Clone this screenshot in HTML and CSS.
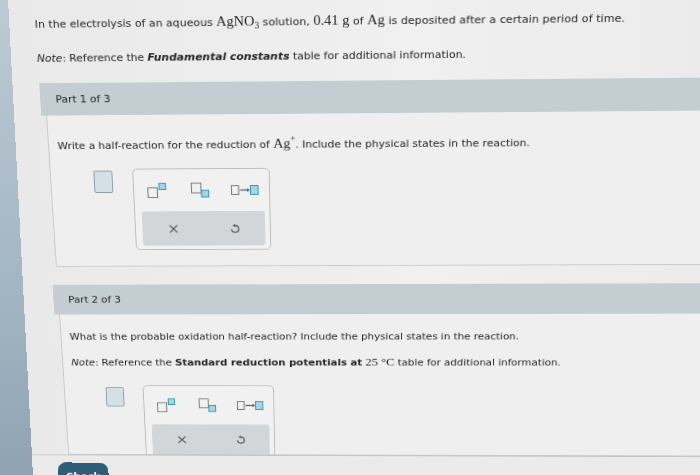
FILE: index.html
```html
<!DOCTYPE html>
<html lang="en">

<head>
    <meta charset="UTF-8">
    <meta name="viewport" content="width=device-width, initial-scale=1.0">
    <title>Electrolysis of AgNO3</title>
    <link rel="stylesheet" href="styles.css">
</head>

<body>
    <div class="screen">
        <main class="content">
            <p class="lead">In the electrolysis of an aqueous <span class="m">AgNO<sub>3</sub></span> solution, <span class="m">0.41 g</span> of <span class="m">Ag</span> is deposited after a certain period of time.</p>
            <p class="note"><i>Note</i>: Reference the <b><i>Fundamental constants</i></b> table for additional information.</p>

            <section class="part part-1">
                <div class="part-head">Part 1 of 3</div>
                <div class="part-body">
                    <p>Write a half-reaction for the reduction of <span class="m">Ag<sup>+</sup></span>. Include the physical states in the reaction.</p>
                    <div class="answer">
                        <span class="slot"></span>
                        <div class="palette">
                            <div class="tools">
                                <svg width="20" height="17" viewBox="0 0 20 17"><rect x="0.5" y="5.5" width="10" height="11" class="box"/><rect x="12.5" y="0.5" width="7" height="7" class="blue"/></svg>
                                <svg width="20" height="17" viewBox="0 0 20 17"><rect x="0.5" y="0.5" width="10" height="11" class="box"/><rect x="11" y="8.5" width="7.5" height="7.5" class="blue"/></svg>
                                <svg width="29" height="11" viewBox="0 0 29 11"><rect x="0.5" y="0.5" width="7.5" height="10" class="box"/><path d="M9.5 5.5h8" class="line"/><path d="M17 3.5l3 2-3 2z" class="head"/><rect x="20.5" y="0.5" width="8" height="10" class="blue"/></svg>
                            </div>
                            <div class="actions">
                                <svg width="10" height="10" viewBox="0 0 10 10"><path d="M1 1l8 8M9 1l-8 8" class="stroke"/></svg>
                                <svg width="10" height="12" viewBox="0 0 10 12"><path d="M5 2.5h0.3a3.8 3.8 0 1 1-3.8 4.1" class="stroke"/><path d="M2.6 2.5l2.8-2v4z" class="fill"/></svg>
                            </div>
                        </div>
                    </div>
                </div>
            </section>

            <section class="part part-2">
                <div class="part-head">Part 2 of 3</div>
                <div class="part-body">
                    <p>What is the probable oxidation half-reaction? Include the physical states in the reaction.</p>
                    <p class="sub-note"><i>Note</i>: Reference the <b>Standard reduction potentials at</b> <span class="m m-small">25 °C</span> table for additional information.</p>
                    <div class="answer">
                        <span class="slot"></span>
                        <div class="palette">
                            <div class="tools">
                                <svg width="20" height="17" viewBox="0 0 20 17"><rect x="0.5" y="5.5" width="10" height="11" class="box"/><rect x="12.5" y="0.5" width="7" height="7" class="blue"/></svg>
                                <svg width="20" height="17" viewBox="0 0 20 17"><rect x="0.5" y="0.5" width="10" height="11" class="box"/><rect x="11" y="8.5" width="7.5" height="7.5" class="blue"/></svg>
                                <svg width="29" height="11" viewBox="0 0 29 11"><rect x="0.5" y="0.5" width="7.5" height="10" class="box"/><path d="M9.5 5.5h8" class="line"/><path d="M17 3.5l3 2-3 2z" class="head"/><rect x="20.5" y="0.5" width="8" height="10" class="blue"/></svg>
                            </div>
                            <div class="actions">
                                <svg width="10" height="10" viewBox="0 0 10 10"><path d="M1 1l8 8M9 1l-8 8" class="stroke"/></svg>
                                <svg width="10" height="12" viewBox="0 0 10 12"><path d="M5 2.5h0.3a3.8 3.8 0 1 1-3.8 4.1" class="stroke"/><path d="M2.6 2.5l2.8-2v4z" class="fill"/></svg>
                            </div>
                        </div>
                    </div>
                </div>
            </section>
        </main>

        <footer class="footer">
            <button class="check">Check</button>
        </footer>
    </div>
</body>

</html>
```

FILE: styles.css
```css
html,
body {
    margin: 0;
    padding: 0;
}

/* monitor bezel on the left, page background on the right */
body {
    height: 475px;
    overflow: hidden;
    background:
        linear-gradient(87deg, transparent 32.9px, #e9e9e9 32.9px, #f0f0f0 60%, #ebebeb 100%),
        linear-gradient(180deg, #bccad4 0%, #a3b6c4 60%, #8fa3b2 100%);
}

/* the photographed screen: seen a little from above and from the left */
.screen {
    width: 820px;
    color: #242424;
    font-family: "DejaVu Sans", "Liberation Sans", sans-serif;
    font-size: 11px;
    line-height: 16px;
    transform-origin: 0 0;
    transform: matrix3d(0.976677, -0.010876, 0, -0.0000299657,
            0.070337, 0.960916, 0, 0.000193314,
            0, 0, 1, 0,
            9.31145, 2.24857, 0, 1);
}

.content {
    padding: 16px 0 0 24.6px;
}

p {
    margin: 0;
}

.lead {
    letter-spacing: 0.08px;
}

.m {
    font-family: "Liberation Serif", serif;
    font-size: 14.5px;
    line-height: 0;
    letter-spacing: 0;
}

.m-small {
    font-size: 13.5px;
}

.m sub {
    font-size: 9.5px;
    vertical-align: -2.8px;
}

.m sup {
    font-size: 9.5px;
    vertical-align: 6.6px;
}

.note {
    margin-top: 20px;
}

.part-1 {
    margin-top: 17.6px;
}

.part-2 {
    margin-top: 21px;
}

.part-head {
    height: 35px;
    line-height: 35px;
    padding-left: 16.5px;
    background: #c4cdd2;
}

.part-body {
    margin-left: 5px;
    padding: 26.8px 0 18.3px 9.5px;
    background: #efefef;
    border-left: 1px solid #c9c9c9;
    border-bottom: 1px solid #c9c9c9;
}

.part-2 .part-body {
    height: 171.4px;
    box-sizing: border-box;
    padding-top: 18.5px;
    overflow: hidden;
}

.sub-note {
    margin-top: 15.3px;
}

.answer {
    display: flex;
    align-items: flex-start;
    gap: 21.7px;
    margin-top: 16.9px;
    padding-left: 36.1px;
}

.part-2 .answer {
    margin-top: 18.7px;
}

.slot {
    width: 19.5px;
    height: 24.5px;
    margin-top: 2px;
    box-sizing: border-box;
    background: #d3e1e7;
    border: 1px solid #8c9da6;
    border-radius: 2px;
}

.palette {
    width: 144px;
    box-sizing: border-box;
    padding-bottom: 3.5px;
    background: #f1f1f1;
    border: 1px solid #bcbcbc;
    border-radius: 5px;
}

.tools {
    display: grid;
    grid-template-columns: repeat(3, 1fr);
    align-items: center;
    justify-items: center;
    height: 47px;
    padding: 0 3px 0 1px;
}

.actions {
    display: grid;
    grid-template-columns: 1fr 1fr;
    align-items: center;
    justify-items: center;
    height: 39px;
    margin: 0 5px 0 6.5px;
    background: #d2d6d9;
    border-radius: 3px;
}

.box {
    fill: none;
    stroke: #7a7a7a;
    stroke-width: 1.1;
}

.blue {
    fill: #a6d6e1;
    stroke: #3d9bb3;
    stroke-width: 1.1;
}

.line {
    stroke: #555;
    stroke-width: 1.3;
}

.head {
    fill: #555;
}

.stroke {
    fill: none;
    stroke: #5a5a5a;
    stroke-width: 1.3;
}

.fill {
    fill: #5a5a5a;
}

.footer {
    height: 80px;
    margin-left: -11px;
    padding: 9px 0 0 27.7px;
    background: #ebebeb;
    border-top: 1px solid #c6c6c6;
}

.check {
    width: 57px;
    height: 30px;
    padding: 5px 0 0;
    color: white;
    background: #2d5e77;
    border: none;
    border-radius: 10px;
    font-family: "DejaVu Sans", "Liberation Sans", sans-serif;
    font-size: 11.5px;
    font-weight: bold;
    line-height: 14px;
    vertical-align: top;
}
```
